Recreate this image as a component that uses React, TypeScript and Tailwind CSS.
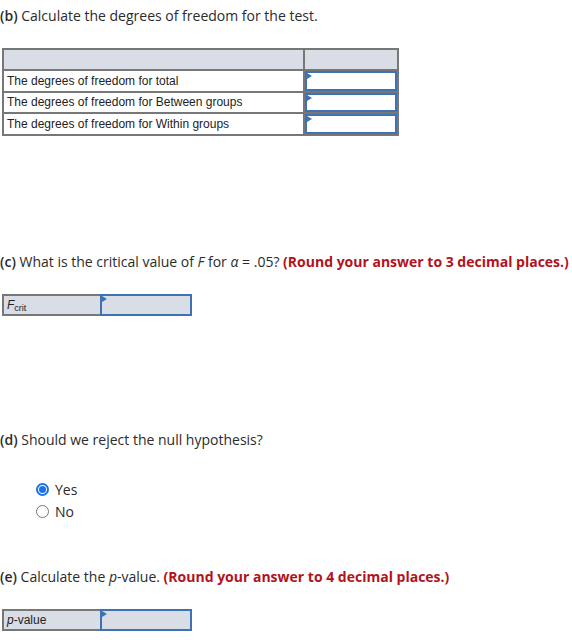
import React from "react";

const font = { fontFamily: "'Open Sans', Lato, sans-serif" };

function Marker() {
  return (
    <span className="absolute left-0 top-0 h-0 w-0 border-y-[3px] border-l-[5px] border-y-transparent border-l-[#3b73b9]" />
  );
}

function InputCell({ bg = "bg-white" }: { bg?: string }) {
  return (
    <div className={`relative h-full w-full border-2 border-[#3f72b5] ${bg}`}>
      <Marker />
    </div>
  );
}

function Heading({ tag, children }: { tag: string; children: React.ReactNode }) {
  return (
    <div className="text-[14px] leading-[18px] text-[#2b2b2b]">
      <b className="font-semibold">({tag})</b> {children}
    </div>
  );
}

function Red({ children }: { children: React.ReactNode }) {
  return <b className="font-bold text-[#b3121b]">{children}</b>;
}

function SmallBox({ label }: { label: React.ReactNode }) {
  return (
    <div className="ml-[2px] flex h-[22px] w-[190px] bg-[#d9dde5]" style={{ fontFamily: "'Liberation Sans', Arial, sans-serif" }}>
      <div className="flex w-[98px] items-center border-2 border-r-0 border-[#777] px-[3px] text-[12px] text-[#222]">
        {label}
      </div>
      <div className="w-[92px]">
        <InputCell bg="bg-[#d9dde5]" />
      </div>
    </div>
  );
}

function Radio({ checked, label }: { checked?: boolean; label: string }) {
  return (
    <div className="flex h-[22px] items-center gap-[6px] text-[14px] text-[#2b2b2b]">
      {checked ? (
        <span className="flex h-[13px] w-[13px] items-center justify-center rounded-full border-2 border-[#1a73e8] bg-white">
          <span className="h-[7px] w-[7px] rounded-full bg-[#1a73e8]" />
        </span>
      ) : (
        <span className="h-[13px] w-[13px] rounded-full border border-[#767676] bg-white" />
      )}
      <span>{label}</span>
    </div>
  );
}

export default function App() {
  const rows = [
    { text: "The degrees of freedom for total", h: "h-[22px]" },
    { text: "The degrees of freedom for Between groups", h: "h-[21px]" },
    { text: "The degrees of freedom for Within groups", h: "h-[22px]" },
  ];

  return (
    <div className="h-[640px] w-[572px] bg-white" style={font}>
      <div className="pt-[7px]">
        <Heading tag="b">Calculate the degrees of freedom for the test.</Heading>
      </div>

      <table
        className="ml-[2px] mt-[23px] border-collapse text-[12px] text-[#222]"
        style={{ fontFamily: "'Liberation Sans', Arial, sans-serif" }}
      >
        <tbody>
          <tr className="h-[21px] bg-[#d9dde5]">
            <td className="w-[301px] border-2 border-[#777]" />
            <td className="w-[94px] border-2 border-[#777]" />
          </tr>
          {rows.map((r) => (
            <tr key={r.text} className={r.h}>
              <td className="border-2 border-[#777] px-[3px] py-0 leading-[17px]">{r.text}</td>
              <td className={`${r.h} border-2 border-[#777] p-0`}>
                <InputCell />
              </td>
            </tr>
          ))}
        </tbody>
      </table>

      <div className="mt-[117px]">
        <Heading tag="c">
          What is the critical value of <i>F</i> for <i>α</i> = .05? <Red>(Round your answer to 3 decimal places.)</Red>
        </Heading>
      </div>

      <div className="mt-[23px]">
        <SmallBox
          label={
            <span>
              <i>F</i>
              <sub className="text-[9px]">crit</sub>
            </span>
          }
        />
      </div>

      <div className="mt-[115px]">
        <Heading tag="d">Should we reject the null hypothesis?</Heading>
      </div>

      <div className="ml-[36px] mt-[29px] flex flex-col">
        <Radio checked label="Yes" />
        <Radio label="No" />
      </div>

      <div className="mt-[46px]">
        <Heading tag="e">
          Calculate the <i>p</i>-value. <Red>(Round your answer to 4 decimal places.)</Red>
        </Heading>
      </div>

      <div className="mt-[23px]">
        <SmallBox label={<span><i>p</i>-value</span>} />
      </div>
    </div>
  );
}
